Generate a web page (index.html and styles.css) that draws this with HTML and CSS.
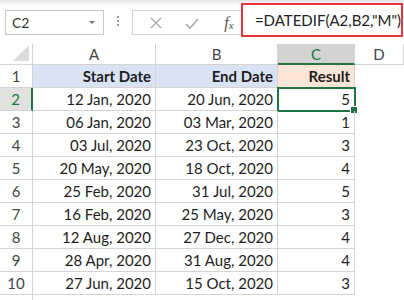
FILE: index.html
```html
<!DOCTYPE html>
<html>
<head>
<meta charset="utf-8">
<link rel="stylesheet" href="styles.css">
</head>
<body>
<div class="app">
  <div class="fbar">
    <div class="namebox"><span class="ref">C2</span><span class="arrow"></span></div>
    <div class="grip"><i></i><i></i><i></i></div>
    <div class="fbtns">
      <svg class="ico" width="14" height="14" viewBox="0 0 14 14"><path d="M2 2 L12 12 M12 2 L2 12" stroke="#a8a8a8" stroke-width="1.3" fill="none"/></svg>
      <svg class="ico" width="16" height="14" viewBox="0 0 16 14"><path d="M2 8 L6 12 L14 3" stroke="#a8a8a8" stroke-width="1.6" fill="none"/></svg>
      <span class="fx">f<sub>x</sub></span>
    </div>
    <div class="formula">=DATEDIF(A2,B2,"M")</div>
  </div>
  <div class="sheet">
    <div class="corner"><span class="tri"></span></div>
    <div class="ch">A</div>
    <div class="ch">B</div>
    <div class="ch sel">C</div>
    <div class="ch">D</div>

    <div class="rh">1</div>
    <div class="c hd blue">Start Date</div>
    <div class="c hd blue">End Date</div>
    <div class="c hd peach">Result</div>
    <div class="d"></div>

    <div class="rh rsel">2</div>
    <div class="c">12 Jan, 2020</div>
    <div class="c">20 Jun, 2020</div>
    <div class="c active">5<span class="handle"></span></div>
    <div class="d"></div>

    <div class="rh">3</div>
    <div class="c">06 Jan, 2020</div>
    <div class="c">03 Mar, 2020</div>
    <div class="c">1</div>
    <div class="d"></div>

    <div class="rh">4</div>
    <div class="c">03 Jul, 2020</div>
    <div class="c">23 Oct, 2020</div>
    <div class="c">3</div>
    <div class="d"></div>

    <div class="rh">5</div>
    <div class="c">20 May, 2020</div>
    <div class="c">18 Oct, 2020</div>
    <div class="c">4</div>
    <div class="d"></div>

    <div class="rh">6</div>
    <div class="c">25 Feb, 2020</div>
    <div class="c">31 Jul, 2020</div>
    <div class="c">5</div>
    <div class="d"></div>

    <div class="rh">7</div>
    <div class="c">16 Feb, 2020</div>
    <div class="c">25 May, 2020</div>
    <div class="c">3</div>
    <div class="d"></div>

    <div class="rh">8</div>
    <div class="c">12 Aug, 2020</div>
    <div class="c">27 Dec, 2020</div>
    <div class="c">4</div>
    <div class="d"></div>

    <div class="rh">9</div>
    <div class="c">28 Apr, 2020</div>
    <div class="c">31 Aug, 2020</div>
    <div class="c">4</div>
    <div class="d"></div>

    <div class="rh">10</div>
    <div class="c">27 Jun, 2020</div>
    <div class="c">15 Oct, 2020</div>
    <div class="c">3</div>
    <div class="d"></div>

    <div class="rh last"></div>
    <div class="d"></div>
    <div class="d"></div>
    <div class="d"></div>
    <div class="d"></div>
  </div>
</div>
</body>
</html>
```

FILE: styles.css
```css
* { box-sizing: border-box; }
html, body { margin: 0; padding: 0; background: #fff; }
body {
  font-family: Lato, "Liberation Sans", sans-serif;
  color: #222;
  width: 404px;
  height: 300px;
  overflow: hidden;
}
.app {
  background: linear-gradient(#e4e4e4 0px, #f6f6f6 4px, #ffffff 9px);
}
.fbar {
  height: 44px;
  display: flex;
  align-items: flex-start;
  padding-left: 5px;
}
.namebox {
  margin-top: 10px;
  width: 105px;
  height: 25px;
  border: 1px solid #c8c8c8;
  background: #fff;
  display: flex;
  align-items: center;
  justify-content: space-between;
  padding: 0 8px 0 6px;
  font-size: 14px;
  color: #333;
}
.arrow {
  width: 0; height: 0;
  border-left: 3px solid transparent;
  border-right: 3px solid transparent;
  border-top: 3px solid #777;
}
.grip {
  width: 30px;
  margin-top: 16px;
  display: flex;
  flex-direction: column;
  align-items: center;
  gap: 2px;
}
.grip i {
  display: block;
  width: 2px;
  height: 2px;
  background: #9a9a9a;
}
.fbtns {
  margin-top: 10px;
  width: 115px;
  height: 25px;
  border: 1px solid #d0d0d0;
  border-right: none;
  background: #fff;
  display: flex;
  align-items: center;
  padding-left: 16px;
  gap: 21px;
}
.fx {
  font-family: "Liberation Serif", serif;
  font-style: italic;
  font-size: 16px;
  color: #555;
  margin-left: 3px;
}
.fx sub { font-size: 11px; vertical-align: -1px; }
.formula {
  margin-top: 3px;
  flex: 1;
  height: 34px;
  border: 2px solid #e2363b;
  background: #fff;
  display: flex;
  align-items: center;
  padding-left: 12px;
  font-size: 15px;
  color: #222;
  margin-right: 1px;
}
.sheet {
  display: grid;
  grid-template-columns: 33px 123px 122px 77px 1fr;
  grid-template-rows: 21px repeat(10, 23px) 5px;
}
.corner {
  position: relative;
  border-right: 1px solid #d4d4d4;
  border-bottom: 1px solid #d4d4d4;
}
.tri {
  position: absolute;
  right: 3px;
  bottom: 3px;
  width: 0; height: 0;
  border-left: 16px solid transparent;
  border-bottom: 16px solid #dcdcdc;
}
.ch {
  border-right: 1px solid #d4d4d4;
  border-bottom: 1px solid #d4d4d4;
  display: flex;
  align-items: center;
  justify-content: center;
  font-size: 15px;
  color: #444;
}
.ch.sel {
  background: #d3d3d3;
  color: #217346;
  border-bottom: 2px solid #217346;
}
.rh {
  border-right: 1px solid #d4d4d4;
  border-bottom: 1px solid #d4d4d4;
  display: flex;
  align-items: center;
  justify-content: center;
  font-size: 15px;
  color: #444;
}
.rh.last { border-bottom: none; }
.rh.rsel {
  background: #e1e1e1;
  color: #217346;
  border-right: 2px solid #217346;
}
.c {
  position: relative;
  border-right: 1px solid #d4d4d4;
  border-bottom: 1px solid #d4d4d4;
  display: flex;
  align-items: center;
  justify-content: flex-end;
  padding-right: 4px;
  font-size: 15px;
  color: #1e1e1e;
}
.c.hd { font-weight: bold; }
.c.blue { background: #dae3f3; }
.c.peach { background: #fce4d6; }
.c.active {
  outline: 2px solid #217346;
  outline-offset: -1px;
}
.handle {
  position: absolute;
  right: -4px;
  bottom: -4px;
  width: 6px;
  height: 6px;
  background: #217346;
  border: 1px solid #fff;
  box-sizing: content-box;
}
```
